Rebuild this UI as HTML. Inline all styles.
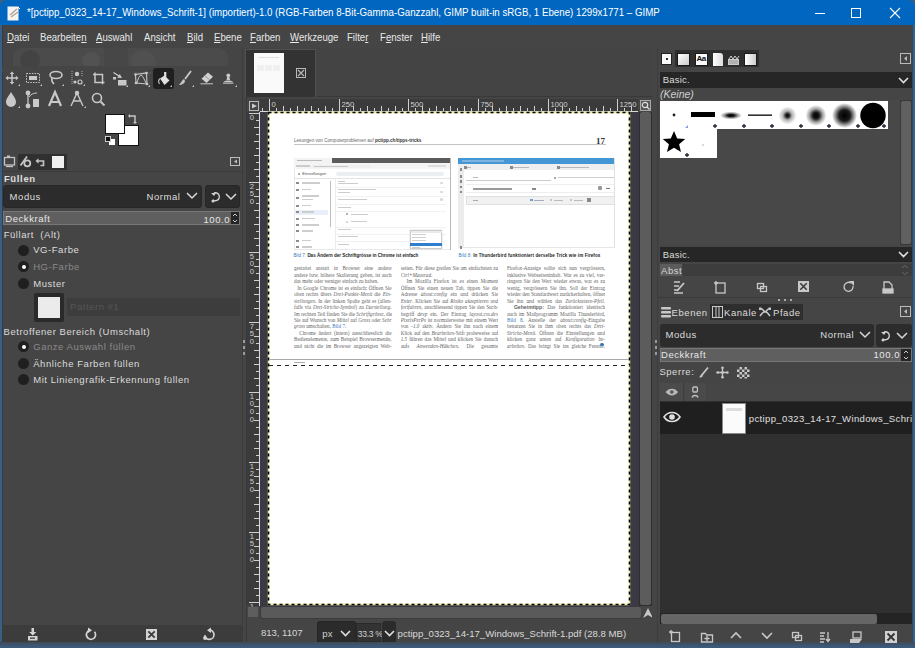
<!DOCTYPE html>
<html><head><meta charset="utf-8">
<style>
*{margin:0;padding:0;box-sizing:border-box}
html,body{width:915px;height:648px;overflow:hidden;background:linear-gradient(180deg,#3a5f84 0,#3a5f84 641px,#404a55 642px,#3c5877 646px,#3b5b7e 648px)}
body{position:relative;font-family:"Liberation Sans",sans-serif;color:#dadada;font-size:12px}
.a{position:absolute}
.t{position:absolute;white-space:nowrap;line-height:1}
svg{position:absolute;overflow:visible}
#title{left:0;top:0;width:915px;height:25px;background:#0066bf;color:#fff;border-radius:7px 7px 0 0}
#app{left:2px;top:25px;width:911px;height:617px;background:#454545}
.mn{font-size:10.8px;color:#e8e8e8;top:32.1px;transform:scaleX(0.89);transform-origin:0 0}
.ui{font-size:9.5px;letter-spacing:0.55px;color:#dcdcdc}
.dark{background:#2b2b2b}
.pl{font-family:"Liberation Serif",serif;font-size:5.15px;line-height:6px;height:6.2px;color:#646464;white-space:nowrap;overflow:hidden;text-align:justify}
</style></head><body>
<!-- title bar -->
<div id="title" class="a">
  <svg style="left:7px;top:6px" width="14" height="15" viewBox="0 0 14 15">
    <rect x="0.5" y="0.5" width="11" height="14" fill="#f4f4f4"/>
    <path d="M3 9 L10 3 M4 11 L11 6" stroke="#b0a090" stroke-width="1.3"/>
    <path d="M11 1 L13 3" stroke="#fff" stroke-width="1"/>
  </svg>
  <div class="t" style="left:26.5px;top:7.3px;font-size:10.9px;color:#fff;transform:scaleX(0.893);transform-origin:0 0">*[pctipp_0323_14-17_Windows_Schrift-1] (importiert)-1.0 (RGB-Farben 8-Bit-Gamma-Ganzzahl, GIMP built-in sRGB, 1 Ebene) 1299x1771 – GIMP</div>
  <div class="a" style="left:815px;top:13px;width:10px;height:1px;background:#fff"></div>
  <div class="a" style="left:851px;top:8px;width:10px;height:10px;border:1px solid #fff"></div>
  <svg style="left:890px;top:8px" width="10" height="10" viewBox="0 0 10 10"><path d="M0 0L10 10M10 0L0 10" stroke="#fff" stroke-width="1.1"/></svg>
</div>
<div id="app" class="a"></div>
<div class="a" style="left:913px;top:25px;width:2px;height:617px;background:#28639a"></div>
<div class="a" style="left:2px;top:25px;width:1px;height:617px;background:#333d48"></div>

<!-- menu -->
<div class="t mn" style="left:7px"><u>D</u>atei</div>
<div class="t mn" style="left:40px">Bearbeite<u>n</u></div>
<div class="t mn" style="left:96px"><u>A</u>uswahl</div>
<div class="t mn" style="left:144px">An<u>s</u>icht</div>
<div class="t mn" style="left:187px"><u>B</u>ild</div>
<div class="t mn" style="left:214px"><u>E</u>bene</div>
<div class="t mn" style="left:250px"><u>F</u>arben</div>
<div class="t mn" style="left:290px"><u>W</u>erkzeuge</div>
<div class="t mn" style="left:347px">Filte<u>r</u></div>
<div class="t mn" style="left:380px">F<u>e</u>nster</div>
<div class="t mn" style="left:421px"><u>H</u>ilfe</div>


<!-- LEFT PANEL -->
<!-- wilber silhouette -->
<div class="a" style="left:13px;top:48px;width:215px;height:18px;background:#4b4b4b;border-radius:9px 9px 0 0"></div>
<div class="a" style="left:20px;top:50px;width:20px;height:20px;border-radius:50%;background:#434343"></div>
<div class="a" style="left:82px;top:52px;width:18px;height:18px;border-radius:50%;background:#525252"></div>
<div class="a" style="left:104px;top:48px;width:24px;height:18px;background:#474747"></div>
<div class="a" style="left:130px;top:50px;width:26px;height:26px;border-radius:50%;background:#505050"></div>
<div class="a" style="left:2px;top:66px;width:242px;height:6px;background:#454545"></div>

<!-- active tool bg -->
<div class="a" style="left:153px;top:68px;width:21px;height:21px;background:#1f1f1f;border-radius:3px"></div>

<svg style="left:0;top:0" width="245" height="150">
 <g fill="none" stroke="#c8c8c8" stroke-width="1.6">
  <!-- move -->
  <path d="M12 73v10M7 78h10" stroke-width="1.5"/>
  <path d="M12 71.5l2.3 2.6h-4.6zM12 84.5l2.3-2.6h-4.6zM5.5 78l2.6-2.3v4.6zM18.5 78l-2.6-2.3v4.6z" fill="#c8c8c8" stroke="none"/>
  <!-- rect select -->
  <rect x="26.5" y="73.5" width="13" height="9" stroke-dasharray="1.5 1.2" stroke-width="1"/>
  <rect x="29" y="76" width="8" height="4" fill="#c8c8c8" stroke="none"/>
  <!-- lasso -->
  <ellipse cx="56" cy="75" rx="6" ry="3.5"/>
  <path d="M52 78c-1 3 1 5 2 6"/>
  <!-- fuzzy select -->
  <circle cx="77" cy="74" r="2.2" fill="#c8c8c8" stroke="none"/>
  <circle cx="75" cy="82" r="1.6" fill="#c8c8c8" stroke="none"/>
  <circle cx="80" cy="82" r="2" stroke-width="1.2"/>
  <path d="M72 71v14M82 71v6" stroke-width="0.8" stroke-dasharray="1 1"/>
  <!-- crop -->
  <path d="M95 72.5v10h9.5M93 74.5h9.5v9.8" stroke-width="1.5"/>
  <!-- scale / transform -->
  <path d="M113.5 72.5l5.5 3.5" stroke-width="1.4"/>
  <path d="M122 78l-4.8-0.2 2.6-3.8z" fill="#c8c8c8" stroke="none"/>
  <rect x="118" y="80" width="8.5" height="5.5" fill="#c8c8c8" stroke="none"/>
  <rect x="113" y="77" width="3" height="2.5" fill="#c8c8c8" stroke="none"/>
  <!-- perspective -->
  <path d="M135.5 74.5l11-1.5 0.5 11-11-1z" stroke-width="1.1"/>
  <path d="M137 83c1-4 2-7 4-8 2 1 3 4 5 8" stroke-width="1"/>
  <circle cx="135.5" cy="74.5" r="1.3" fill="#c8c8c8" stroke="none"/><circle cx="146.5" cy="73" r="1.3" fill="#c8c8c8" stroke="none"/>
  <circle cx="147" cy="84" r="1.3" fill="#c8c8c8" stroke="none"/><circle cx="136" cy="83" r="1.3" fill="#c8c8c8" stroke="none"/>
  <!-- bucket fill -->
  <path d="M165.2 72v6" stroke="#e0e0e0" stroke-width="2.2"/>
  <path d="M160 78.5l4.5-3 5 5-5 4.5z" fill="#e0e0e0" stroke="none"/>
  <path d="M160 78.5c-1.5 1.5-1.5 4-0.5 5.5" stroke="#bdbdbd" stroke-width="1.2"/>
  <!-- paintbrush -->
  <path d="M191 71l-6 8" stroke-width="1.8"/>
  <path d="M184 79c-2 1-3 4-5 6 3 0 6-2 6-4z" fill="#c8c8c8" stroke="none"/>
  <!-- eraser -->
  <path d="M208 72.5l5 4.2-6.5 6.3-5-4.2z" fill="#cfcfcf" stroke="none"/>
  <path d="M204.5 75.5l5 4.2" stroke="#8a8a8a" stroke-width="0.8"/>
  <path d="M200.5 83.8h12.5" stroke-width="1"/>
  <!-- clone stamp -->
  <circle cx="228.3" cy="75.3" r="1.9" fill="#c8c8c8" stroke="none"/>
  <path d="M227.3 76.5h2l0.8 3.5h-3.6z" fill="#c8c8c8" stroke="none"/>
  <path d="M223.5 82.3c0.5-2.5 9-2.5 9.5 0z" fill="#c8c8c8" stroke="none"/>
  <path d="M223 83.2h10.5" stroke-width="1"/>
  <!-- row 2: blur drop -->
  <path d="M11 92c-3 5-5 7-5 10a5 5 0 0 0 10 0c0-3-2-5-5-10z" fill="#c8c8c8" stroke="none"/>
  <!-- paths -->
  <path d="M28 93v14" stroke-width="1.3"/>
  <circle cx="28" cy="93" r="1.6" fill="#c8c8c8"/><circle cx="28" cy="106" r="1.6" fill="#c8c8c8"/>
  <path d="M29 97c2-3 5-4 8-4" stroke-width="1"/>
  <rect x="33" y="99" width="6" height="8" fill="#c8c8c8" stroke="none"/>
  <!-- text -->
  <path d="M49 106l6-14 6 14M51 102h8" stroke-width="2.2"/>
  <!-- measure-ish A -->
  <path d="M71 106l6-13 6 13M73 101h8" stroke-width="1.4"/>
  <circle cx="77" cy="93" r="1.4" fill="#c8c8c8"/>
  <!-- zoom -->
  <circle cx="97" cy="98" r="4.5" stroke-width="1.6"/>
  <path d="M100.5 101.5l4 4" stroke-width="2"/>
 </g>
 <g fill="#c8c8c8">
  <path d="M18 86l2-2v2z"/><path d="M40 86l2-2v2z"/><path d="M62 86l2-2v2z"/><path d="M83 86l2-2v2z"/>
  <path d="M126 87l2-2v2z"/><path d="M148 87l2-2v2z"/><path d="M170 87l2-2v2z"/><path d="M192 87l2-2v2z"/>
  <path d="M235 87l2-2v2z"/><path d="M18 108l2-2v2z"/><path d="M84 108l2-2v2z"/>
 </g>
</svg>

<!-- FG/BG -->
<div class="a" style="left:118px;top:125px;width:21px;height:21px;background:#fff;border:1px solid #111"></div>
<div class="a" style="left:105px;top:114px;width:20px;height:20px;background:#fff;border:1px solid #111"></div>
<div class="a" style="left:109px;top:139px;width:6px;height:6px;background:#fff"></div>
<div class="a" style="left:105px;top:136px;width:6px;height:6px;background:#111;border:1px solid #ccc"></div>
<svg style="left:128px;top:114px" width="11" height="10" viewBox="0 0 11 10"><path d="M1 2h6v6" fill="none" stroke="#c8c8c8" stroke-width="1.4"/><path d="M0 2l2-2v4z M5 8h4l-2 2z" fill="#c8c8c8"/></svg>

<!-- tool options tabs -->
<div class="a" style="left:18px;top:154px;width:49px;height:16px;background:#303030"></div>
<svg style="left:0;top:150px" width="245" height="25">
  <g fill="none" stroke="#c4c4c4" stroke-width="1.3">
   <rect x="4.5" y="7.5" width="10" height="7.5"/><path d="M6 16.5h7"/>
  </g>
  <rect x="7" y="5.5" width="3" height="1.5" fill="#c4c4c4"/>
  <path d="M20.5 15.5l6.5-9" stroke="#c4c4c4" stroke-width="1.8"/>
  <circle cx="27.3" cy="13.3" r="3" fill="none" stroke="#c4c4c4" stroke-width="1.8"/>
  <path d="M38 11h5.5v4.5h-3" fill="none" stroke="#c4c4c4" stroke-width="1.7"/>
  <path d="M35.5 11l3-2.8v5.6z" fill="#c4c4c4"/>
  <rect x="52" y="6" width="12" height="12" fill="#f0f0f0"/>
  <rect x="230.5" y="7.5" width="9" height="8" fill="none" stroke="#bdbdbd"/>
  <path d="M237 9.5l-3 2 3 2z" fill="#bdbdbd"/>
</svg>
<div class="a" style="left:2px;top:171px;width:243px;height:1px;background:#3a3a3a"></div>
<div class="t" style="left:3.9px;top:174.3px;font-size:9.5px;font-weight:bold;color:#e0e0e0;letter-spacing:0.65px">Füllen</div>

<!-- Modus combo -->
<div class="a dark" style="left:3px;top:185px;width:199px;height:23px;border-radius:3px;background:#2c2c2c;border:1px solid #262626"></div>
<div class="t ui" style="left:9.6px;top:192px">Modus</div>
<div class="t ui" style="left:146.5px;top:191.7px">Normal</div>
<svg style="left:186px;top:192px" width="12" height="8"><path d="M1 1l5 5 5-5" fill="none" stroke="#d8d8d8" stroke-width="1.5"/></svg>
<div class="a dark" style="left:205px;top:185px;width:35px;height:23px;border-radius:3px;background:#2c2c2c;border:1px solid #262626"></div>
<svg style="left:209px;top:190px" width="30" height="14">
  <path d="M5 3a4 4 0 1 1-1 7" fill="none" stroke="#d0d0d0" stroke-width="1.4"/><path d="M2 3h5l-2 3z" fill="#d0d0d0"/><circle cx="4" cy="11" r="1.5" fill="#d0d0d0"/>
  <path d="M17 4l5 5 5-5" fill="none" stroke="#d8d8d8" stroke-width="1.5"/>
</svg>

<!-- Deckkraft -->
<div class="a" style="left:3px;top:211px;width:237px;height:14px;background:#5f5f5f;border:1px solid #777"></div>
<div class="a" style="left:231px;top:212px;width:8px;height:12px;background:#252525"></div>
<svg style="left:231px;top:212px" width="8" height="12"><path d="M2 4l2-2 2 2M2 8l2 2 2-2" fill="none" stroke="#ccc" stroke-width="1"/></svg>
<div class="t ui" style="left:5.3px;top:214.4px;color:#e6e6e6">Deckkraft</div>
<div class="t ui" style="left:203.5px;top:214.5px;color:#e6e6e6">100.0</div>

<div class="t ui" style="left:3.7px;top:229.9px;white-space:pre">Füllart  (Alt)</div>
<div class="a" style="left:18px;top:245px;width:11px;height:11px;border-radius:50%;background:#1f1f1f"></div>
<div class="t ui" style="left:33.2px;top:245.3px">VG-Farbe</div>
<div class="a" style="left:18px;top:261px;width:11px;height:11px;border-radius:50%;background:#1f1f1f"></div>
<div class="a" style="left:21.5px;top:264.5px;width:4px;height:4px;border-radius:50%;background:#fff"></div>
<div class="t ui" style="left:33.2px;top:262px;color:#8a8a8a">HG-Farbe</div>
<div class="a" style="left:18px;top:278px;width:11px;height:11px;border-radius:50%;background:#1f1f1f"></div>
<div class="t ui" style="left:33.2px;top:278.8px">Muster</div>

<div class="a" style="left:34px;top:293px;width:30px;height:29px;background:#2a2a2a;border-radius:2px"></div>
<div class="a" style="left:38px;top:297px;width:22px;height:21px;background:#ebebeb"></div>
<div class="a" style="left:67px;top:298px;width:173px;height:18px;background:#3d3d3d"></div>
<div class="t ui" style="left:70px;top:302px;color:#555">Pattern #1</div>

<div class="t ui" style="left:3.5px;top:326.8px">Betroffener Bereich (Umschalt)</div>
<div class="a" style="left:18px;top:341px;width:11px;height:11px;border-radius:50%;background:#1f1f1f"></div>
<div class="a" style="left:21.5px;top:344.5px;width:4px;height:4px;border-radius:50%;background:#fff"></div>
<div class="t ui" style="left:33.2px;top:341.7px;color:#8a8a8a">Ganze Auswahl füllen</div>
<div class="a" style="left:18px;top:358px;width:11px;height:11px;border-radius:50%;background:#1f1f1f"></div>
<div class="t ui" style="left:33.2px;top:358.8px">Ähnliche Farben füllen</div>
<div class="a" style="left:18px;top:374px;width:11px;height:11px;border-radius:50%;background:#1f1f1f"></div>
<div class="t ui" style="left:33.2px;top:375.2px">Mit Liniengrafik-Erkennung füllen</div>

<!-- left bottom buttons -->
<div class="a" style="left:2px;top:625px;width:240px;height:17px;background:#3c3c3c"></div>
<svg style="left:0;top:625px" width="245" height="17">
 <g fill="#d4d4d4">
  <path d="M31.5 3h2.5v4h2.3l-3.55 3.5-3.55-3.5h2.3z"/><rect x="28" y="11" width="9.5" height="4.5"/>
 </g>
 <rect x="30" y="12.5" width="5" height="1.3" fill="#3c3c3c"/>
 <g fill="none" stroke="#d4d4d4" stroke-width="1.7">
  <path d="M90 5.2a4.6 4.6 0 1 0 4.5 1.5"/>
  <rect x="146" y="4" width="11" height="11" fill="#d4d4d4" stroke="none"/><path d="M148.3 6.3l6.4 6.4M154.7 6.3l-6.4 6.4" stroke="#3c3c3c" stroke-width="1.8"/>
  <path d="M209 5.2a4.6 4.6 0 1 1 -4.2 5"/>
 </g>
 <path d="M88 2.5v5.5l4-2.7z" fill="#d4d4d4"/>
 <path d="M211 2.5v5.5l-4-2.7z" fill="#d4d4d4"/>
 <circle cx="205" cy="13" r="1.9" fill="#d4d4d4"/>
</svg>

<!-- left pane separator -->
<div class="a" style="left:242px;top:48px;width:1px;height:594px;background:#3c3c3c"></div>
<div class="a" style="left:243px;top:48px;width:3px;height:594px;background:#454545"></div>
<div class="a" style="left:246px;top:48px;width:1px;height:594px;background:#3a3a3a"></div>
<div class="a" style="left:243px;top:340px;width:2px;height:2.5px;background:#9a9a9a"></div>
<div class="a" style="left:243px;top:346px;width:2px;height:2.5px;background:#9a9a9a"></div>
<div class="a" style="left:243px;top:352px;width:2px;height:2.5px;background:#9a9a9a"></div>


<!-- CENTER -->
<!-- image tab bar -->
<div class="a" style="left:247px;top:48px;width:405px;height:50px;background:#444"></div>
<div class="a" style="left:245px;top:49px;width:71px;height:48px;background:#333;border:1px solid #505050;border-bottom:none"></div>
<div class="a" style="left:316px;top:96px;width:336px;height:1px;background:#393939"></div>
<div class="a" style="left:254px;top:53px;width:30px;height:40px;background:#fafafa"></div>
<div class="a" style="left:258px;top:57px;width:21px;height:1px;background:#e0e0e0"></div>
<div class="a" style="left:257px;top:65px;width:7px;height:6px;background:#f0f0f0"></div>
<div class="a" style="left:265px;top:65px;width:7px;height:6px;background:#f0f0f0"></div>
<div class="a" style="left:273px;top:65px;width:7px;height:6px;background:#f0f0f0"></div>
<svg style="left:296px;top:68px" width="10" height="10"><rect x="0.5" y="0.5" width="9" height="9" fill="none" stroke="#b8b8b8"/><path d="M2 2l6 6M8 2l-6 6" stroke="#b8b8b8" stroke-width="1.2"/></svg>

<!-- rulers -->
<div class="a" style="left:247px;top:98px;width:408px;height:522px;background:#454545"></div>
<div class="a" style="left:260px;top:99px;width:378px;height:13px;background:#3b3b3b"></div>
<div class="a" style="left:247px;top:112px;width:13px;height:494px;background:#3b3b3b"></div>
<svg style="left:249px;top:101px" width="10" height="10"><rect x="0.5" y="0.5" width="9" height="9" fill="none" stroke="#bbb"/><path d="M3 2.5l5 2.5-5 2.5z" fill="#ccc"/></svg>
<svg id="hruler" style="left:260px;top:99px" width="378" height="13"><rect x="0" y="12" width="378" height="1" fill="#d8d8d8"/><path d="M2.5 9V12" stroke="#d0d0d0" stroke-width="1"/><path d="M9.5 0V12" stroke="#d0d0d0" stroke-width="1"/><text x="11.5" y="7.8" font-size="7.7" fill="#d0d0d0" font-family="Liberation Sans">0</text><path d="M16.5 9V12" stroke="#d0d0d0" stroke-width="1"/><path d="M23.5 7V12" stroke="#d0d0d0" stroke-width="1"/><path d="M30.5 9V12" stroke="#d0d0d0" stroke-width="1"/><path d="M37.5 7V12" stroke="#d0d0d0" stroke-width="1"/><path d="M44.5 9V12" stroke="#d0d0d0" stroke-width="1"/><path d="M51.5 7V12" stroke="#d0d0d0" stroke-width="1"/><path d="M58.5 9V12" stroke="#d0d0d0" stroke-width="1"/><path d="M65.5 7V12" stroke="#d0d0d0" stroke-width="1"/><path d="M72.5 9V12" stroke="#d0d0d0" stroke-width="1"/><path d="M79.5 0V12" stroke="#d0d0d0" stroke-width="1"/><text x="81.5" y="7.8" font-size="7.7" fill="#d0d0d0" font-family="Liberation Sans">250</text><path d="M86.5 9V12" stroke="#d0d0d0" stroke-width="1"/><path d="M93.5 7V12" stroke="#d0d0d0" stroke-width="1"/><path d="M100.5 9V12" stroke="#d0d0d0" stroke-width="1"/><path d="M107.5 7V12" stroke="#d0d0d0" stroke-width="1"/><path d="M114.5 9V12" stroke="#d0d0d0" stroke-width="1"/><path d="M121.5 7V12" stroke="#d0d0d0" stroke-width="1"/><path d="M128.5 9V12" stroke="#d0d0d0" stroke-width="1"/><path d="M135.5 7V12" stroke="#d0d0d0" stroke-width="1"/><path d="M142.5 9V12" stroke="#d0d0d0" stroke-width="1"/><path d="M148.5 0V12" stroke="#d0d0d0" stroke-width="1"/><text x="150.5" y="7.8" font-size="7.7" fill="#d0d0d0" font-family="Liberation Sans">500</text><path d="M155.5 9V12" stroke="#d0d0d0" stroke-width="1"/><path d="M162.5 7V12" stroke="#d0d0d0" stroke-width="1"/><path d="M169.5 9V12" stroke="#d0d0d0" stroke-width="1"/><path d="M176.5 7V12" stroke="#d0d0d0" stroke-width="1"/><path d="M183.5 9V12" stroke="#d0d0d0" stroke-width="1"/><path d="M190.5 7V12" stroke="#d0d0d0" stroke-width="1"/><path d="M197.5 9V12" stroke="#d0d0d0" stroke-width="1"/><path d="M204.5 7V12" stroke="#d0d0d0" stroke-width="1"/><path d="M211.5 9V12" stroke="#d0d0d0" stroke-width="1"/><path d="M218.5 0V12" stroke="#d0d0d0" stroke-width="1"/><text x="220.5" y="7.8" font-size="7.7" fill="#d0d0d0" font-family="Liberation Sans">750</text><path d="M225.5 9V12" stroke="#d0d0d0" stroke-width="1"/><path d="M232.5 7V12" stroke="#d0d0d0" stroke-width="1"/><path d="M239.5 9V12" stroke="#d0d0d0" stroke-width="1"/><path d="M246.5 7V12" stroke="#d0d0d0" stroke-width="1"/><path d="M253.5 9V12" stroke="#d0d0d0" stroke-width="1"/><path d="M260.5 7V12" stroke="#d0d0d0" stroke-width="1"/><path d="M267.5 9V12" stroke="#d0d0d0" stroke-width="1"/><path d="M274.5 7V12" stroke="#d0d0d0" stroke-width="1"/><path d="M281.5 9V12" stroke="#d0d0d0" stroke-width="1"/><path d="M288.5 0V12" stroke="#d0d0d0" stroke-width="1"/><text x="290.5" y="7.8" font-size="7.7" fill="#d0d0d0" font-family="Liberation Sans">1000</text><path d="M295.5 9V12" stroke="#d0d0d0" stroke-width="1"/><path d="M302.5 7V12" stroke="#d0d0d0" stroke-width="1"/><path d="M309.5 9V12" stroke="#d0d0d0" stroke-width="1"/><path d="M316.5 7V12" stroke="#d0d0d0" stroke-width="1"/><path d="M322.5 9V12" stroke="#d0d0d0" stroke-width="1"/><path d="M329.5 7V12" stroke="#d0d0d0" stroke-width="1"/><path d="M336.5 9V12" stroke="#d0d0d0" stroke-width="1"/><path d="M343.5 7V12" stroke="#d0d0d0" stroke-width="1"/><path d="M350.5 9V12" stroke="#d0d0d0" stroke-width="1"/><path d="M357.5 0V12" stroke="#d0d0d0" stroke-width="1"/><text x="359.5" y="7.8" font-size="7.7" fill="#d0d0d0" font-family="Liberation Sans">1250</text><path d="M364.5 9V12" stroke="#d0d0d0" stroke-width="1"/><path d="M371.5 7V12" stroke="#d0d0d0" stroke-width="1"/></svg>
<svg id="vruler" style="left:247px;top:112px" width="13" height="494"><rect x="12" y="0" width="1" height="494" fill="#d8d8d8"/><path d="M2 1.5H12" stroke="#d0d0d0" stroke-width="1"/><text x="5" y="7.8" text-anchor="middle" font-size="7.7" fill="#cfcfcf" font-family="Liberation Sans">0</text><path d="M9 8.5H12" stroke="#d0d0d0" stroke-width="1"/><path d="M7 15.5H12" stroke="#d0d0d0" stroke-width="1"/><path d="M9 22.5H12" stroke="#d0d0d0" stroke-width="1"/><path d="M7 29.5H12" stroke="#d0d0d0" stroke-width="1"/><path d="M9 36.5H12" stroke="#d0d0d0" stroke-width="1"/><path d="M7 43.5H12" stroke="#d0d0d0" stroke-width="1"/><path d="M9 50.5H12" stroke="#d0d0d0" stroke-width="1"/><path d="M7 57.5H12" stroke="#d0d0d0" stroke-width="1"/><path d="M9 64.5H12" stroke="#d0d0d0" stroke-width="1"/><path d="M2 70.5H12" stroke="#d0d0d0" stroke-width="1"/><text x="5" y="76.8" text-anchor="middle" font-size="7.7" fill="#cfcfcf" font-family="Liberation Sans">2</text><text x="5" y="84.39999999999999" text-anchor="middle" font-size="7.7" fill="#cfcfcf" font-family="Liberation Sans">5</text><text x="5" y="92.0" text-anchor="middle" font-size="7.7" fill="#cfcfcf" font-family="Liberation Sans">0</text><path d="M9 77.5H12" stroke="#d0d0d0" stroke-width="1"/><path d="M7 84.5H12" stroke="#d0d0d0" stroke-width="1"/><path d="M9 91.5H12" stroke="#d0d0d0" stroke-width="1"/><path d="M7 98.5H12" stroke="#d0d0d0" stroke-width="1"/><path d="M9 105.5H12" stroke="#d0d0d0" stroke-width="1"/><path d="M7 112.5H12" stroke="#d0d0d0" stroke-width="1"/><path d="M9 119.5H12" stroke="#d0d0d0" stroke-width="1"/><path d="M7 126.5H12" stroke="#d0d0d0" stroke-width="1"/><path d="M9 133.5H12" stroke="#d0d0d0" stroke-width="1"/><path d="M2 140.5H12" stroke="#d0d0d0" stroke-width="1"/><text x="5" y="146.8" text-anchor="middle" font-size="7.7" fill="#cfcfcf" font-family="Liberation Sans">5</text><text x="5" y="154.4" text-anchor="middle" font-size="7.7" fill="#cfcfcf" font-family="Liberation Sans">0</text><text x="5" y="162.0" text-anchor="middle" font-size="7.7" fill="#cfcfcf" font-family="Liberation Sans">0</text><path d="M9 147.5H12" stroke="#d0d0d0" stroke-width="1"/><path d="M7 154.5H12" stroke="#d0d0d0" stroke-width="1"/><path d="M9 161.5H12" stroke="#d0d0d0" stroke-width="1"/><path d="M7 168.5H12" stroke="#d0d0d0" stroke-width="1"/><path d="M9 175.5H12" stroke="#d0d0d0" stroke-width="1"/><path d="M7 182.5H12" stroke="#d0d0d0" stroke-width="1"/><path d="M9 189.5H12" stroke="#d0d0d0" stroke-width="1"/><path d="M7 196.5H12" stroke="#d0d0d0" stroke-width="1"/><path d="M9 203.5H12" stroke="#d0d0d0" stroke-width="1"/><path d="M2 210.5H12" stroke="#d0d0d0" stroke-width="1"/><text x="5" y="216.8" text-anchor="middle" font-size="7.7" fill="#cfcfcf" font-family="Liberation Sans">7</text><text x="5" y="224.4" text-anchor="middle" font-size="7.7" fill="#cfcfcf" font-family="Liberation Sans">5</text><text x="5" y="232.0" text-anchor="middle" font-size="7.7" fill="#cfcfcf" font-family="Liberation Sans">0</text><path d="M9 217.5H12" stroke="#d0d0d0" stroke-width="1"/><path d="M7 224.5H12" stroke="#d0d0d0" stroke-width="1"/><path d="M9 231.5H12" stroke="#d0d0d0" stroke-width="1"/><path d="M7 238.5H12" stroke="#d0d0d0" stroke-width="1"/><path d="M9 245.5H12" stroke="#d0d0d0" stroke-width="1"/><path d="M7 252.5H12" stroke="#d0d0d0" stroke-width="1"/><path d="M9 259.5H12" stroke="#d0d0d0" stroke-width="1"/><path d="M7 266.5H12" stroke="#d0d0d0" stroke-width="1"/><path d="M9 273.5H12" stroke="#d0d0d0" stroke-width="1"/><path d="M2 280.5H12" stroke="#d0d0d0" stroke-width="1"/><text x="5" y="286.8" text-anchor="middle" font-size="7.7" fill="#cfcfcf" font-family="Liberation Sans">1</text><text x="5" y="294.40000000000003" text-anchor="middle" font-size="7.7" fill="#cfcfcf" font-family="Liberation Sans">0</text><text x="5" y="302.0" text-anchor="middle" font-size="7.7" fill="#cfcfcf" font-family="Liberation Sans">0</text><text x="5" y="309.6" text-anchor="middle" font-size="7.7" fill="#cfcfcf" font-family="Liberation Sans">0</text><path d="M9 287.5H12" stroke="#d0d0d0" stroke-width="1"/><path d="M7 294.5H12" stroke="#d0d0d0" stroke-width="1"/><path d="M9 301.5H12" stroke="#d0d0d0" stroke-width="1"/><path d="M7 308.5H12" stroke="#d0d0d0" stroke-width="1"/><path d="M9 315.5H12" stroke="#d0d0d0" stroke-width="1"/><path d="M7 322.5H12" stroke="#d0d0d0" stroke-width="1"/><path d="M9 329.5H12" stroke="#d0d0d0" stroke-width="1"/><path d="M7 336.5H12" stroke="#d0d0d0" stroke-width="1"/><path d="M9 343.5H12" stroke="#d0d0d0" stroke-width="1"/><path d="M2 350.5H12" stroke="#d0d0d0" stroke-width="1"/><text x="5" y="356.8" text-anchor="middle" font-size="7.7" fill="#cfcfcf" font-family="Liberation Sans">1</text><text x="5" y="364.40000000000003" text-anchor="middle" font-size="7.7" fill="#cfcfcf" font-family="Liberation Sans">2</text><text x="5" y="372.0" text-anchor="middle" font-size="7.7" fill="#cfcfcf" font-family="Liberation Sans">5</text><text x="5" y="379.6" text-anchor="middle" font-size="7.7" fill="#cfcfcf" font-family="Liberation Sans">0</text><path d="M9 357.5H12" stroke="#d0d0d0" stroke-width="1"/><path d="M7 364.5H12" stroke="#d0d0d0" stroke-width="1"/><path d="M9 371.5H12" stroke="#d0d0d0" stroke-width="1"/><path d="M7 378.5H12" stroke="#d0d0d0" stroke-width="1"/><path d="M9 385.5H12" stroke="#d0d0d0" stroke-width="1"/><path d="M7 392.5H12" stroke="#d0d0d0" stroke-width="1"/><path d="M9 399.5H12" stroke="#d0d0d0" stroke-width="1"/><path d="M7 406.5H12" stroke="#d0d0d0" stroke-width="1"/><path d="M9 413.5H12" stroke="#d0d0d0" stroke-width="1"/><path d="M2 420.5H12" stroke="#d0d0d0" stroke-width="1"/><text x="5" y="426.8" text-anchor="middle" font-size="7.7" fill="#cfcfcf" font-family="Liberation Sans">1</text><text x="5" y="434.40000000000003" text-anchor="middle" font-size="7.7" fill="#cfcfcf" font-family="Liberation Sans">5</text><text x="5" y="442.0" text-anchor="middle" font-size="7.7" fill="#cfcfcf" font-family="Liberation Sans">0</text><text x="5" y="449.6" text-anchor="middle" font-size="7.7" fill="#cfcfcf" font-family="Liberation Sans">0</text><path d="M9 427.5H12" stroke="#d0d0d0" stroke-width="1"/><path d="M7 434.5H12" stroke="#d0d0d0" stroke-width="1"/><path d="M9 441.5H12" stroke="#d0d0d0" stroke-width="1"/><path d="M7 448.5H12" stroke="#d0d0d0" stroke-width="1"/><path d="M9 455.5H12" stroke="#d0d0d0" stroke-width="1"/><path d="M7 462.5H12" stroke="#d0d0d0" stroke-width="1"/><path d="M9 469.5H12" stroke="#d0d0d0" stroke-width="1"/><path d="M7 476.5H12" stroke="#d0d0d0" stroke-width="1"/><path d="M9 483.5H12" stroke="#d0d0d0" stroke-width="1"/><path d="M2 490.5H12" stroke="#d0d0d0" stroke-width="1"/><text x="5" y="496.8" text-anchor="middle" font-size="7.7" fill="#cfcfcf" font-family="Liberation Sans">1</text><text x="5" y="504.40000000000003" text-anchor="middle" font-size="7.7" fill="#cfcfcf" font-family="Liberation Sans">7</text><text x="5" y="512.0" text-anchor="middle" font-size="7.7" fill="#cfcfcf" font-family="Liberation Sans">5</text><text x="5" y="519.6" text-anchor="middle" font-size="7.7" fill="#cfcfcf" font-family="Liberation Sans">0</text></svg>
<svg style="left:640px;top:100px" width="11" height="11"><rect x="0.5" y="0.5" width="10" height="10" fill="#555" stroke="#aaa"/><circle cx="5" cy="5" r="2.7" fill="none" stroke="#ddd" stroke-width="1.2"/><path d="M7 7l2.5 2.5" stroke="#ddd" stroke-width="1.3"/></svg>

<!-- canvas -->
<div class="a" style="left:260px;top:112px;width:380px;height:495px;background:#3a3944"></div>
<div class="a" style="left:268px;top:112px;width:362px;height:493px;background:#fff;border:1px dashed #000"></div>
<svg style="left:268px;top:112px" width="363" height="494">
 <rect x="0.5" y="0.5" width="361" height="492" fill="none" stroke="#e8e89a" stroke-width="1.6"/>
 <rect x="0.5" y="0.5" width="361" height="492" fill="none" stroke="#000" stroke-width="1.6" stroke-dasharray="3 3"/>
 <path d="M1 253.5h361" stroke="#fff" stroke-width="1.2"/>
 <path d="M1 253.5h361" stroke="#222" stroke-width="1.2" stroke-dasharray="4 4"/>
</svg>
<div id="page" class="a" style="left:269px;top:113px;width:360px;height:252px;overflow:hidden">
<div class="t" style="left:25.0px;top:25.5px;font-size:4.6px;color:#666">Lesungen von Computerproblemen auf <b style="color:#333">pctipp.ch/tipps-tricks</b></div>
<div class="a" style="left:25.0px;top:30.8px;width:312.0px;height:0.6px;background:#c4c4c4"></div>
<div class="t" style="left:327.0px;top:23.8px;font-family:'Liberation Serif';font-weight:bold;font-size:9px;color:#333">17</div>
<div class="a" style="left:24.5px;top:45.4px;width:157.1px;height:91.6px;background:#fff;border:0.5px solid #e8e8e8"></div>
<div class="a" style="left:24.5px;top:45.4px;width:38.0px;height:5.0px;background:#f1f3f4"></div>
<div class="a" style="left:28.0px;top:46.9px;width:25.2px;height:1.6px;background:#bbb"></div>
<div class="a" style="left:62.7px;top:45.4px;width:118.9px;height:5.0px;background:#5b5b5b"></div>
<div class="a" style="left:24.5px;top:50.4px;width:157.1px;height:6.0px;background:#f4f4f4"></div>
<div class="a" style="left:27.0px;top:52.2px;width:14.0px;height:1.6px;background:#ccc"></div>
<div class="a" style="left:42.0px;top:51.8px;width:60.0px;height:3.2px;background:#efefef;border-radius:2px"></div>
<div class="a" style="left:45.0px;top:52.8px;width:33.6px;height:1.5px;background:#c8c8c8"></div>
<div class="a" style="left:159.0px;top:52.0px;width:18.0px;height:2.2px;background:#ddd"></div>
<div class="t" style="left:33.3px;top:58.6px;font-size:4.1px;color:#555;letter-spacing:-0.05px">Einstellungen</div>
<div class="a" style="left:28.5px;top:59.5px;width:2.8px;height:2.8px;background:#999;border-radius:1px"></div>
<div class="a" style="left:67.0px;top:59.0px;width:108.0px;height:4.4px;background:#eceff1;border-radius:2px"></div>
<div class="a" style="left:24.5px;top:65.3px;width:157.1px;height:0.5px;background:#e4e4e4"></div>
<div class="a" style="left:25.0px;top:96.5px;width:34.0px;height:5.0px;background:#e8effa"></div>
<div class="a" style="left:32.8px;top:69.2px;width:17.9px;height:1.4px;background:#cdcdcd"></div>
<div class="a" style="left:32.8px;top:75.7px;width:9.0px;height:1.4px;background:#cdcdcd"></div>
<div class="a" style="left:32.8px;top:82.2px;width:16.8px;height:1.4px;background:#cdcdcd"></div>
<div class="a" style="left:32.8px;top:85.7px;width:11.2px;height:1.4px;background:#cdcdcd"></div>
<div class="a" style="left:32.8px;top:91.7px;width:9.0px;height:1.4px;background:#cdcdcd"></div>
<div class="a" style="left:32.8px;top:98.2px;width:12.3px;height:1.4px;background:#cdcdcd"></div>
<div class="a" style="left:32.8px;top:104.7px;width:13.4px;height:1.4px;background:#cdcdcd"></div>
<div class="a" style="left:32.8px;top:111.2px;width:16.8px;height:1.4px;background:#cdcdcd"></div>
<div class="a" style="left:32.8px;top:117.2px;width:11.2px;height:1.4px;background:#cdcdcd"></div>
<div class="a" style="left:32.8px;top:126.8px;width:9.0px;height:1.4px;background:#cdcdcd"></div>
<div class="a" style="left:32.8px;top:133.2px;width:10.1px;height:1.4px;background:#cdcdcd"></div>
<div class="a" style="left:27.2px;top:69.0px;width:2.4px;height:2.4px;background:#8c8c8c"></div>
<div class="a" style="left:27.2px;top:75.5px;width:2.4px;height:2.4px;background:#8c8c8c"></div>
<div class="a" style="left:27.2px;top:83.5px;width:2.4px;height:2.4px;background:#8c8c8c"></div>
<div class="a" style="left:27.2px;top:91.5px;width:2.4px;height:2.4px;background:#8c8c8c"></div>
<div class="a" style="left:27.2px;top:98.0px;width:2.4px;height:2.4px;background:#8c8c8c"></div>
<div class="a" style="left:27.2px;top:104.5px;width:2.4px;height:2.4px;background:#8c8c8c"></div>
<div class="a" style="left:27.2px;top:111.0px;width:2.4px;height:2.4px;background:#8c8c8c"></div>
<div class="a" style="left:27.2px;top:117.0px;width:2.4px;height:2.4px;background:#8c8c8c"></div>
<div class="a" style="left:27.2px;top:126.6px;width:2.4px;height:2.4px;background:#8c8c8c"></div>
<div class="a" style="left:27.2px;top:133.0px;width:2.4px;height:2.4px;background:#8c8c8c"></div>
<div class="a" style="left:61.3px;top:68.0px;width:1.2px;height:46.0px;background:#bdbdbd"></div>
<div class="a" style="left:66.0px;top:66.0px;width:0.5px;height:71.0px;background:#ececec"></div>
<div class="a" style="left:82.0px;top:100.5px;width:16.8px;height:1.4px;background:#cdcdcd"></div>
<div class="a" style="left:82.0px;top:108.0px;width:15.7px;height:1.4px;background:#cdcdcd"></div>
<div class="a" style="left:69.0px;top:67.5px;width:6.7px;height:1.4px;background:#cdcdcd"></div>
<div class="a" style="left:69.0px;top:70.0px;width:20.2px;height:1.4px;background:#cdcdcd"></div>
<div class="a" style="left:69.0px;top:76.0px;width:38.1px;height:1.4px;background:#cdcdcd"></div>
<div class="a" style="left:69.0px;top:78.5px;width:12.3px;height:1.4px;background:#cdcdcd"></div>
<div class="a" style="left:69.0px;top:86.0px;width:29.1px;height:1.4px;background:#cdcdcd"></div>
<div class="a" style="left:69.0px;top:94.0px;width:13.4px;height:1.4px;background:#cdcdcd"></div>
<div class="a" style="left:69.0px;top:116.0px;width:13.4px;height:1.4px;background:#cdcdcd"></div>
<div class="a" style="left:69.0px;top:123.0px;width:20.2px;height:1.4px;background:#cdcdcd"></div>
<div class="a" style="left:69.0px;top:131.0px;width:11.2px;height:1.4px;background:#cdcdcd"></div>
<div class="a" style="left:67.0px;top:74.0px;width:110.0px;height:0.5px;background:#f2f2f2"></div>
<div class="a" style="left:67.0px;top:83.0px;width:110.0px;height:0.5px;background:#f2f2f2"></div>
<div class="a" style="left:67.0px;top:91.0px;width:110.0px;height:0.5px;background:#f2f2f2"></div>
<div class="a" style="left:67.0px;top:98.0px;width:110.0px;height:0.5px;background:#f2f2f2"></div>
<div class="a" style="left:67.0px;top:114.0px;width:110.0px;height:0.5px;background:#f2f2f2"></div>
<div class="a" style="left:67.0px;top:121.0px;width:110.0px;height:0.5px;background:#f2f2f2"></div>
<div class="a" style="left:67.0px;top:128.0px;width:110.0px;height:0.5px;background:#f2f2f2"></div>
<div class="a" style="left:171.0px;top:68.5px;width:2.5px;height:2.5px;background:#d8d8d8;border-radius:50%"></div>
<div class="a" style="left:171.0px;top:77.5px;width:2.5px;height:2.5px;background:#d8d8d8;border-radius:50%"></div>
<div class="a" style="left:171.0px;top:85.0px;width:2.5px;height:2.5px;background:#d8d8d8;border-radius:50%"></div>
<div class="a" style="left:77.0px;top:100.0px;width:2.2px;height:2.2px;background:#999;border-radius:50%"></div>
<div class="a" style="left:77.0px;top:107.5px;width:2.2px;height:2.2px;border:0.5px solid #bbb;border-radius:50%"></div>
<div class="a" style="left:140.7px;top:117.0px;width:32.6px;height:18.5px;background:#fff;border:0.5px solid #ccc;box-shadow:0 0 1.5px #ccc"></div>
<div class="a" style="left:141.5px;top:117.6px;width:31.0px;height:2.6px;background:#eaeaea"></div>
<div class="a" style="left:143.0px;top:121.2px;width:14.0px;height:0.8px;background:#d0d0d0"></div>
<div class="a" style="left:143.0px;top:124.0px;width:14.0px;height:0.8px;background:#d0d0d0"></div>
<div class="a" style="left:143.0px;top:126.8px;width:14.0px;height:0.8px;background:#d0d0d0"></div>
<div class="a" style="left:141.3px;top:130.0px;width:31.5px;height:2.7px;background:#2f7fd0"></div>
<div class="a" style="left:143.0px;top:133.5px;width:8.0px;height:1.0px;background:#ccc"></div>
<div class="a" style="left:181.0px;top:45.4px;width:0.6px;height:91.6px;background:#b8b8b8"></div>
<div class="t" style="left:24.6px;top:140.6px;font-size:4.5px;color:#222"><span style="color:#3b78c0">Bild 7:</span> <b>Das Ändern der Schriftgrösse in Chrome ist einfach</b></div>
<div class="a" style="left:189.4px;top:45.4px;width:156.6px;height:90.1px;background:#fff;border:0.5px solid #e6e6e6"></div>
<div class="a" style="left:189.4px;top:45.4px;width:156.6px;height:5.6px;background:#4596d4"></div>
<div class="a" style="left:193.0px;top:47.3px;width:41.6px;height:1.4px;background:#7fb3e0"></div>
<div class="a" style="left:189.4px;top:51.0px;width:156.6px;height:6.4px;background:#efefef"></div>
<div class="a" style="left:195.0px;top:53.0px;width:2.5px;height:2.5px;background:#888"></div>
<div class="a" style="left:198.0px;top:53.5px;width:3.6px;height:1.6px;background:#b8b8b8"></div>
<div class="a" style="left:241.0px;top:53.0px;width:2.5px;height:2.5px;background:#888"></div>
<div class="a" style="left:244.0px;top:53.5px;width:15.6px;height:1.6px;background:#b8b8b8"></div>
<div class="a" style="left:288.0px;top:53.0px;width:2.5px;height:2.5px;background:#888"></div>
<div class="a" style="left:291.0px;top:53.5px;width:28.8px;height:1.6px;background:#b8b8b8"></div>
<div class="a" style="left:189.4px;top:57.4px;width:5.6px;height:78.1px;background:#ececec"></div>
<div class="a" style="left:190.9px;top:55.0px;width:2.5px;height:2.5px;background:#8a8a8a"></div>
<div class="a" style="left:190.9px;top:62.0px;width:2.5px;height:2.5px;background:#8a8a8a"></div>
<div class="a" style="left:190.9px;top:67.0px;width:2.5px;height:2.5px;background:#8a8a8a"></div>
<div class="a" style="left:190.9px;top:72.5px;width:2.5px;height:2.5px;background:#8a8a8a"></div>
<div class="a" style="left:190.9px;top:77.5px;width:2.5px;height:2.5px;background:#8a8a8a"></div>
<div class="a" style="left:190.9px;top:133.0px;width:2.5px;height:2.5px;background:#8a8a8a"></div>
<div class="a" style="left:197.0px;top:61.0px;width:85.0px;height:6.7px;background:#fff;border-bottom:0.6px solid #ccc"></div>
<div class="a" style="left:204.0px;top:63.9px;width:4.8px;height:1.6px;background:#bbb"></div>
<div class="a" style="left:285.0px;top:63.5px;width:2.2px;height:2.2px;border:0.5px solid #aaa"></div>
<div class="a" style="left:289.0px;top:63.9px;width:55.5px;height:1.4px;background:#cfcfcf"></div>
<div class="a" style="left:197.0px;top:71.4px;width:149.0px;height:8.3px;background:#fff;border-top:0.5px solid #eee;border-bottom:0.5px solid #eee"></div>
<div class="a" style="left:204.0px;top:75.1px;width:38.8px;height:1.6px;background:#9a9a9a"></div>
<div class="a" style="left:263.0px;top:75.1px;width:4.2px;height:1.8px;background:#888"></div>
<div class="a" style="left:329.0px;top:73.3px;width:4.0px;height:4.0px;background:#999;border-radius:1px"></div>
<div class="a" style="left:337.0px;top:74.8px;width:4.0px;height:1.0px;background:#777"></div>
<div class="a" style="left:197.0px;top:82.5px;width:149.0px;height:9.3px;background:#f1f1f1;border:0.5px solid #e0e0e0"></div>
<div class="a" style="left:204.0px;top:86.6px;width:4.8px;height:1.6px;background:#aaa"></div>
<div class="a" style="left:261.0px;top:85.8px;width:2.6px;height:2.6px;background:#7a9cc8"></div>
<div class="a" style="left:265.0px;top:86.6px;width:10.2px;height:1.6px;background:#aab"></div>
<div class="a" style="left:281.0px;top:85.8px;width:2.4px;height:2.4px;border:0.5px solid #aaa;border-radius:50%"></div>
<div class="a" style="left:285.0px;top:86.6px;width:8.7px;height:1.6px;background:#bbb"></div>
<div class="a" style="left:301.0px;top:85.8px;width:2.4px;height:2.4px;border:0.5px solid #aaa;border-radius:50%"></div>
<div class="a" style="left:305.0px;top:86.6px;width:8.7px;height:1.6px;background:#bbb"></div>
<div class="a" style="left:318.0px;top:84.8px;width:4.0px;height:4.0px;background:#888"></div>
<div class="a" style="left:345.4px;top:45.4px;width:0.6px;height:90.1px;background:#e2e2e2"></div>
<div class="t" style="left:189.4px;top:140.6px;font-size:4.5px;color:#222;letter-spacing:0.12px"><span style="color:#3b78c0">Bild 8:</span> <b>In Thunderbird funktioniert derselbe Trick wie im Firefox</b></div>
<div class="a pl" style="left:25.0px;top:152.4px;width:97.5px;text-align-last:justify">gestattet anstatt in Browser eine andere</div>
<div class="a pl" style="left:25.0px;top:158.8px;width:97.5px;text-align-last:justify">andere bzw. höhere Skalierung geben, ist auch</div>
<div class="a pl" style="left:25.0px;top:165.3px;width:97.5px;text-align-last:left">das mehr oder weniger einfach zu haben.</div>
<div class="a pl" style="left:25.0px;top:171.8px;width:97.5px;text-align-last:justify">&nbsp;&nbsp;In Google Chrome ist es einfach: Öffnen Sie</div>
<div class="a pl" style="left:25.0px;top:178.2px;width:97.5px;text-align-last:justify">oben rechts übers <i>Drei-Punkte-Menü</i> die <i>Ein-</i></div>
<div class="a pl" style="left:25.0px;top:184.6px;width:97.5px;text-align-last:justify"><i>stellungen</i>. In der linken Spalte geht es (allen-</div>
<div class="a pl" style="left:25.0px;top:191.1px;width:97.5px;text-align-last:justify">falls via <i>Drei-Striche-Symbol</i>) zu <i>Darstellung</i>.</div>
<div class="a pl" style="left:25.0px;top:197.5px;width:97.5px;text-align-last:justify">Im rechten Teil finden Sie die <i>Schriftgrösse</i>, die</div>
<div class="a pl" style="left:25.0px;top:204.0px;width:97.5px;text-align-last:justify">Sie auf Wunsch von <i>Mittel</i> auf <i>Gross</i> oder <i>Sehr</i></div>
<div class="a pl" style="left:25.0px;top:210.4px;width:97.5px;text-align-last:left"><i>gross</i> umschalten, <span style='color:#3b78c0'>Bild 7</span>.</div>
<div class="a pl" style="left:25.0px;top:216.9px;width:97.5px;text-align-last:justify">&nbsp;&nbsp;Chrome ändert (intern) ausschliesslich die</div>
<div class="a pl" style="left:25.0px;top:223.3px;width:97.5px;text-align-last:justify">Bedienelemente, zum Beispiel Browsermenüs,</div>
<div class="a pl" style="left:25.0px;top:229.8px;width:97.5px;text-align-last:justify">und nicht die im Browser angezeigten Web-</div>
<div class="a pl" style="left:131.7px;top:152.4px;width:97.5px;text-align-last:justify">seiten. Für diese greifen Sie am einfachsten zu</div>
<div class="a pl" style="left:131.7px;top:158.8px;width:97.5px;text-align-last:left"><i>Ctrl+Mausrad</i>.</div>
<div class="a pl" style="left:131.7px;top:165.3px;width:97.5px;text-align-last:justify">&nbsp;&nbsp;Im Mozilla Firefox ist es einen Moment</div>
<div class="a pl" style="left:131.7px;top:171.8px;width:97.5px;text-align-last:justify">Öffnen Sie einen neuen Tab, tippen Sie die</div>
<div class="a pl" style="left:131.7px;top:178.2px;width:97.5px;text-align-last:justify">Adresse <i>about:config</i> ein und drücken Sie</div>
<div class="a pl" style="left:131.7px;top:184.6px;width:97.5px;text-align-last:justify"><i>Enter</i>. Klicken Sie auf <i>Risiko akzeptieren und</i></div>
<div class="a pl" style="left:131.7px;top:191.1px;width:97.5px;text-align-last:justify"><i>fortfahren</i>, anschliessend tippen Sie den Such-</div>
<div class="a pl" style="left:131.7px;top:197.5px;width:97.5px;text-align-last:justify">begriff <i>devp</i> ein. Der Eintrag <i>layout.css.dev</i></div>
<div class="a pl" style="left:131.7px;top:204.0px;width:97.5px;text-align-last:justify"><i>PixelsPerPx</i> ist normalerweise mit einem Wert</div>
<div class="a pl" style="left:131.7px;top:210.4px;width:97.5px;text-align-last:justify">von <i>-1.0</i> aktiv. Ändern Sie ihn nach einem</div>
<div class="a pl" style="left:131.7px;top:216.9px;width:97.5px;text-align-last:justify">Klick auf den <i>Bearbeiten</i>-Stift probeweise auf</div>
<div class="a pl" style="left:131.7px;top:223.3px;width:97.5px;text-align-last:justify"><i>1.5</i> führen das Mittel und klicken Sie danach</div>
<div class="a pl" style="left:131.7px;top:229.8px;width:97.5px;text-align-last:justify">aufs <i>Anwenden-Häkchen</i>. Die gesamte</div>
<div class="a pl" style="left:238.0px;top:152.4px;width:98px;text-align-last:justify">Firefox-Anzeige sollte sich nun vergrössern,</div>
<div class="a pl" style="left:238.0px;top:158.8px;width:98px;text-align-last:justify">inklusive Webseiteninhalt. War es zu viel, ver-</div>
<div class="a pl" style="left:238.0px;top:165.3px;width:98px;text-align-last:justify">ringern Sie den Wert wieder etwas, war es zu</div>
<div class="a pl" style="left:238.0px;top:171.8px;width:98px;text-align-last:justify">wenig, vergrössern Sie ihn. Soll der Eintrag</div>
<div class="a pl" style="left:238.0px;top:178.2px;width:98px;text-align-last:justify">wieder den Standardwert zurückerhalten, öffnen</div>
<div class="a pl" style="left:238.0px;top:184.6px;width:98px;text-align-last:justify">Sie ihn und wählen das <i>Zurücksetzen-Pfeil</i>.</div>
<div class="a pl" style="left:238.0px;top:191.1px;width:98px;text-align-last:justify">&nbsp;&nbsp;<b style='font-family:Liberation Sans'>Geheimtipp:</b> Das funktioniert identisch</div>
<div class="a pl" style="left:238.0px;top:197.5px;width:98px;text-align-last:justify">auch im Mailprogramm Mozilla Thunderbird,</div>
<div class="a pl" style="left:238.0px;top:204.0px;width:98px;text-align-last:justify"><span style='color:#3b78c0'>Bild 8</span>. Anstelle der <i>about:config</i>-Eingabe</div>
<div class="a pl" style="left:238.0px;top:210.4px;width:98px;text-align-last:justify">benutzen Sie in ihm oben rechts das <i>Drei-</i></div>
<div class="a pl" style="left:238.0px;top:216.9px;width:98px;text-align-last:justify"><i>Striche-Menü</i>. Öffnen die Einstellungen und</div>
<div class="a pl" style="left:238.0px;top:223.3px;width:98px;text-align-last:justify">klicken ganz unten auf <i>Konfiguration be-</i></div>
<div class="a pl" style="left:238.0px;top:229.8px;width:98px;text-align-last:justify"><i>arbeiten</i>. Das bringt Sie ins gleiche Fenster.</div>
<div class="a" style="left:331.0px;top:229.5px;width:3.5px;height:3.5px;background:#3b78c0;border-radius:50%"></div>
<div class="a" style="left:0.0px;top:246.3px;width:360.0px;height:0.6px;background:#aaa"></div>
<div class="a" style="left:25.0px;top:248.5px;width:10.5px;height:1.4px;background:#aaa"></div>
</div>

<!-- scrollbars -->
<div class="a" style="left:639px;top:112px;width:13px;height:494px;background:#2e2e2e"></div>
<div class="a" style="left:640px;top:112px;width:11px;height:493px;background:#5c5c5c;border-radius:2px"></div>
<div class="a" style="left:260px;top:607px;width:381px;height:12px;background:#3b3b3b"></div>
<div class="a" style="left:261px;top:607px;width:380px;height:11px;background:#5a5a5a;border-radius:2px"></div>
<div class="a" style="left:248px;top:607px;width:10px;height:10px;background:#5e5e5e"></div>
<svg style="left:642px;top:607px" width="12" height="12"><path d="M6 1l5 10-5-3-5 3z" fill="#c6c6c6"/></svg>

<!-- status bar -->
<div class="a" style="left:247px;top:619px;width:408px;height:23px;background:#454545"></div>
<div class="t" style="left:261px;top:628px;font-size:9.6px;color:#d6d6d6;letter-spacing:-0.05px">813, 1107</div>
<div class="a" style="left:317px;top:621px;width:38.5px;height:21px;background:#2b2b2b;border-radius:3px 3px 0 0;border:1px solid #262626;border-bottom:none"></div>
<div class="t" style="left:322.3px;top:629px;font-size:9.6px;color:#cfcfcf">px</div>
<svg style="left:339.5px;top:629.5px" width="11" height="7"><path d="M1 1l4.5 4.5 4.5-4.5" fill="none" stroke="#e0e0e0" stroke-width="1.6"/></svg>
<div class="a" style="left:356px;top:623px;width:25px;height:19px;background:#333;border:1px solid #2a2a2a"></div>
<div class="t" style="left:357.8px;top:629.6px;font-size:8.6px;color:#d0d0d0;letter-spacing:-0.35px">33.3 %</div>
<div class="a" style="left:381.5px;top:621px;width:14px;height:21px;background:#2b2b2b;border-radius:3px 3px 0 0"></div>
<svg style="left:383.5px;top:629.5px" width="11" height="7"><path d="M1 1l4.5 4.5 4.5-4.5" fill="none" stroke="#e0e0e0" stroke-width="1.6"/></svg>
<div class="t" style="left:397.6px;top:629px;font-size:9.62px;color:#dadada">pctipp_0323_14-17_Windows_Schrift-1.pdf (28.8 MB)</div>

<!-- right pane separator -->
<div class="a" style="left:652px;top:48px;width:6px;height:594px;background:#454545"></div>
<div class="a" style="left:657px;top:48px;width:1px;height:594px;background:#3d3d3d"></div>
<div class="a" style="left:655px;top:340px;width:2px;height:2.5px;background:#9a9a9a"></div>
<div class="a" style="left:655px;top:346px;width:2px;height:2.5px;background:#9a9a9a"></div>
<div class="a" style="left:655px;top:352px;width:2px;height:2.5px;background:#9a9a9a"></div>


<!-- RIGHT PANEL -->
<!-- dockable tabs -->
<div class="a" style="left:658px;top:50px;width:101px;height:17px;background:#2e2e2e"></div>
<div class="a" style="left:658px;top:50px;width:17px;height:17px;background:#454545"></div>
<div class="a" style="left:661px;top:53px;width:11px;height:12px;background:#fafafa;border:1px solid #222"></div>
<div class="a" style="left:666px;top:58px;width:2px;height:2px;background:#333"></div>
<div class="a" style="left:677px;top:53px;width:13px;height:13px;background:linear-gradient(135deg,#fff,#ccc);border:1px solid #1a1a1a"></div>
<div class="a" style="left:695px;top:53px;width:13px;height:13px;background:#fafafa;border:1px solid #1a1a1a"></div>
<div class="t" style="left:696.5px;top:55px;font-size:8px;font-weight:bold;color:#111;letter-spacing:-0.5px">Aa</div>
<div class="a" style="left:713px;top:53px;width:10px;height:13px;background:linear-gradient(90deg,#fff,#ddd);border-radius:0 3px 0 0"></div>
<svg style="left:727px;top:54px" width="13" height="12"><path d="M1 5h11v6H1z" fill="#ccc"/><path d="M2 5l2-3 2 3 2-3 2 3 2-3" fill="none" stroke="#ccc" stroke-width="1"/><path d="M2 7h9M2 9h9" stroke="#888" stroke-width="0.8"/></svg>
<div class="a" style="left:744px;top:53px;width:13px;height:13px;background:linear-gradient(90deg,#fff,#ccc);border:1px solid #1a1a1a"></div>
<svg style="left:900px;top:53px" width="12" height="12"><rect x="0.5" y="0.5" width="10" height="10" fill="none" stroke="#bbb"/><path d="M7 3l-3 2.5 3 2.5z" fill="#bbb"/></svg>

<!-- Basic. combo -->
<div class="a" style="left:660px;top:72px;width:252px;height:16px;background:#262626"></div>
<div class="t ui" style="left:662.8px;top:75px;letter-spacing:0.2px">Basic.</div>
<svg style="left:898px;top:77px" width="11" height="7"><path d="M1 1l4.5 4.5 4.5-4.5" fill="none" stroke="#e0e0e0" stroke-width="1.6"/></svg>
<div class="t" style="left:660px;top:89px;font-size:10.5px;font-style:italic;color:#cfcfcf">(Keine)</div>

<!-- brushes grid -->
<div class="a" style="left:660px;top:100px;width:240px;height:145px;background:#484848"></div>
<div class="a" style="left:660px;top:101px;width:228px;height:28px;background:#fff"></div>
<div class="a" style="left:660px;top:129px;width:57px;height:29px;background:#fff"></div>
<div class="a" style="left:900px;top:100px;width:12px;height:145px;background:#3a3a3a"></div>
<div class="a" style="left:901px;top:101px;width:10px;height:143px;background:#606060;border-radius:2px"></div>
<svg style="left:660px;top:101px" width="240" height="58">
  <defs>
   <radialGradient id="g1"><stop offset="0" stop-color="#000"/><stop offset="0.2" stop-color="#000" stop-opacity="0.85"/><stop offset="0.5" stop-color="#000" stop-opacity="0.3"/><stop offset="1" stop-color="#000" stop-opacity="0"/></radialGradient>
   <radialGradient id="g2"><stop offset="0" stop-color="#000"/><stop offset="0.3" stop-color="#000" stop-opacity="0.9"/><stop offset="0.65" stop-color="#000" stop-opacity="0.35"/><stop offset="1" stop-color="#000" stop-opacity="0"/></radialGradient>
   <radialGradient id="g3"><stop offset="0" stop-color="#000"/><stop offset="0.45" stop-color="#000" stop-opacity="0.9"/><stop offset="0.75" stop-color="#000" stop-opacity="0.4"/><stop offset="1" stop-color="#000" stop-opacity="0"/></radialGradient>
  </defs>
  <circle cx="14" cy="14" r="1.4" fill="#222"/>
  <rect x="31" y="11" width="24" height="5" fill="#000"/>
  <ellipse cx="71" cy="14.5" rx="11" ry="4" fill="url(#g2)"/>
  <rect x="88" y="13.5" width="24" height="1.3" fill="#000"/>
  <circle cx="127.5" cy="14.5" r="9" fill="url(#g1)"/>
  <circle cx="156" cy="14.5" r="10.5" fill="url(#g2)"/>
  <circle cx="184.5" cy="14.5" r="12.5" fill="url(#g3)"/>
  <circle cx="213" cy="14.5" r="12.7" fill="#000"/>
  <g stroke="#223" stroke-width="1.3">
   <path d="M53 25h4M55 23v4M82 25h4M84 23v4M110 25h4M112 23v4M139 25h4M141 23v4M167 25h4M169 23v4M196 25h4M198 23v4M222 25h4M224 23v4"/>
   <path d="M25 54h4M27 52v4"/>
  </g>
  <path d="M25 27l3-3v3z" fill="#8a9ae0"/>
  <path d="M14 30l3.2 7.5 8 .6-6.1 5.2 1.9 7.8-7-4.3-7 4.3 1.9-7.8-6.1-5.2 8-.6z" fill="#000"/>
  <circle cx="43" cy="44" r="0.8" fill="#aaa"/>
</svg>

<!-- second Basic combo -->
<div class="a" style="left:660px;top:247px;width:252px;height:15px;background:#262626"></div>
<div class="t ui" style="left:662.8px;top:250px;letter-spacing:0.2px">Basic.</div>
<svg style="left:898px;top:251px" width="11" height="7"><path d="M1 1l4.5 4.5 4.5-4.5" fill="none" stroke="#e0e0e0" stroke-width="1.6"/></svg>
<div class="a" style="left:660px;top:264px;width:252px;height:12px;background:#3d3d3d"></div>
<div class="a" style="left:660px;top:264px;width:22px;height:12px;background:#5c5c5c"></div>
<div class="t ui" style="left:661px;top:266px;color:#d6d6d6">Abst</div>
<svg style="left:900px;top:264px" width="10" height="12"><path d="M2 4l3-2.5 3 2.5M2 8l3 2.5 3-2.5" fill="none" stroke="#666" stroke-width="1"/></svg>

<!-- brush buttons -->
<svg style="left:660px;top:278px" width="252" height="18">
 <g fill="none" stroke="#c8c8c8" stroke-width="1.3">
  <path d="M14 4h6M14 8h5M14 12h4M14 15h9"/><path d="M17 13l7-8" stroke-width="1.8"/>
  <rect x="56" y="5" width="9" height="10"/><path d="M56 3v4M54 5h4" />
  <rect x="97.5" y="5.5" width="6" height="5"/><rect x="100.5" y="8.5" width="6" height="5"/>
  <rect x="138" y="3" width="11" height="11" fill="#c8c8c8" stroke="none"/><path d="M140.3 5.3l6.4 6.4M146.7 5.3l-6.4 6.4" stroke="#3a3a3a" stroke-width="1.6"/>
  <path d="M191 5a4.5 4.5 0 1 0 2 3"/>
  <path d="M224 11v-7h5l3 3v4" /><rect x="223" y="11" width="10" height="4" fill="#c8c8c8"/>
 </g>
 <path d="M189 3h5v5z" fill="#c8c8c8"/>
</svg>

<!-- separator -->
<div class="a" style="left:658px;top:297px;width:255px;height:1px;background:#3a3a3a"></div>
<div class="a" style="left:778px;top:299px;width:2px;height:2px;background:#aaa"></div>
<div class="a" style="left:784px;top:299px;width:2px;height:2px;background:#aaa"></div>
<div class="a" style="left:790px;top:299px;width:2px;height:2px;background:#aaa"></div>

<!-- layer tabs -->
<div class="a" style="left:710px;top:304px;width:93px;height:16px;background:#2e2e2e"></div>
<svg style="left:660px;top:304px" width="150" height="16">
  <g fill="#c8c8c8"><rect x="1" y="3" width="10" height="2.5" rx="1"/><rect x="1" y="7" width="10" height="2.5" rx="1"/><rect x="1" y="11" width="10" height="2.5" rx="1"/></g>
  <g fill="none" stroke="#c8c8c8" stroke-width="1"><rect x="52.5" y="2.5" width="10" height="11"/><path d="M56 3v10M59 3v10"/></g>
  <path d="M100 4.5c3 0 4 3 5 3.5s2-3.5 5-3.5M100 12c2-3 3-4 5-4.5 2 .5 3 1.5 5 4.5" fill="none" stroke="#c8c8c8" stroke-width="1.5"/><rect x="99" y="3.5" width="2.5" height="2.5" fill="#c8c8c8"/><rect x="108.5" y="3.5" width="2.5" height="2.5" fill="#c8c8c8"/>
</svg>
<div class="t ui" style="left:671.6px;top:307.5px">Ebenen</div>
<div class="t ui" style="left:724px;top:307.5px">Kanäle</div>
<div class="t ui" style="left:773px;top:307.5px">Pfade</div>
<svg style="left:900px;top:306px" width="12" height="12"><rect x="0.5" y="0.5" width="10" height="10" fill="none" stroke="#bbb"/><path d="M7 3l-3 2.5 3 2.5z" fill="#bbb"/></svg>

<!-- layers mode -->
<div class="a" style="left:660px;top:324px;width:214px;height:23px;background:#2c2c2c;border-radius:3px"></div>
<div class="t ui" style="left:665.5px;top:329.8px">Modus</div>
<div class="t ui" style="left:820.3px;top:329.6px">Normal</div>
<svg style="left:859px;top:331px" width="12" height="8"><path d="M1 1l5 5 5-5" fill="none" stroke="#d8d8d8" stroke-width="1.5"/></svg>
<div class="a" style="left:876px;top:324px;width:36px;height:23px;background:#2c2c2c;border-radius:3px"></div>
<svg style="left:879px;top:329px" width="32" height="14">
  <path d="M5 3a4 4 0 1 1-1 7" fill="none" stroke="#d0d0d0" stroke-width="1.4"/><path d="M2 3h5l-2 3z" fill="#d0d0d0"/><circle cx="4" cy="11" r="1.5" fill="#d0d0d0"/>
  <path d="M18 4l5 5 5-5" fill="none" stroke="#d8d8d8" stroke-width="1.5"/>
</svg>
<div class="a" style="left:660px;top:348px;width:252px;height:14px;background:#5f5f5f;border:1px solid #777"></div>
<div class="a" style="left:901px;top:349px;width:10px;height:12px;background:#252525"></div>
<svg style="left:902px;top:349px" width="8" height="12"><path d="M2 4l2-2 2 2M2 8l2 2 2-2" fill="none" stroke="#ccc" stroke-width="1"/></svg>
<div class="t ui" style="left:661px;top:350px;color:#e6e6e6">Deckkraft</div>
<div class="t ui" style="left:873.5px;top:349.7px;color:#e6e6e6">100.0</div>

<div class="t ui" style="left:659.4px;top:366.9px">Sperre:</div>
<svg style="left:695px;top:364px" width="60" height="16">
  <path d="M13 3.5l-6.5 8" stroke="#c8c8c8" stroke-width="1.7"/><path d="M6.8 10.5c-1.5 .5-2 2-2.5 3 1.5 0 3-.5 3.5-1.5z" fill="#c8c8c8"/>
  <path d="M27.5 3.5v10M22.5 8.5h10" stroke="#c8c8c8" stroke-width="1.3"/>
  <g fill="#c8c8c8"><circle cx="27.5" cy="3.8" r="1.3"/><circle cx="27.5" cy="13.2" r="1.3"/><circle cx="22.6" cy="8.5" r="1.3"/><circle cx="32.4" cy="8.5" r="1.3"/><circle cx="27.5" cy="8.5" r="1.4"/></g>
  <g fill="#c8c8c8"><rect x="44.5" y="3" width="2.5" height="2.5"/><rect x="49.5" y="3" width="2.5" height="2.5"/><rect x="42" y="5.5" width="2.5" height="2.5"/><rect x="47" y="5.5" width="2.5" height="2.5"/><rect x="52" y="5.5" width="2.5" height="2.5"/><rect x="44.5" y="8" width="2.5" height="2.5"/><rect x="49.5" y="8" width="2.5" height="2.5"/><rect x="42" y="10.5" width="2.5" height="2.5"/><rect x="47" y="10.5" width="2.5" height="2.5"/><rect x="52" y="10.5" width="2.5" height="2.5"/><rect x="44.5" y="13" width="2.5" height="1.5"/><rect x="49.5" y="13" width="2.5" height="1.5"/></g>
</svg>

<!-- layer list -->
<div class="a" style="left:660px;top:383px;width:252px;height:18px;background:#464646"></div>
<div class="a" style="left:660px;top:383px;width:24px;height:18px;background:#4b4b4b;border-right:1px solid #3e3e3e"></div>
<div class="a" style="left:685px;top:383px;width:21px;height:18px;background:#4a4a4a"></div>
<svg style="left:660px;top:383px" width="50" height="18">
  <path d="M5.5 9c3.5-4.5 9.5-4.5 12.5 0-3 4.5-9 4.5-12.5 0z" fill="#b8b8b8"/><circle cx="11.8" cy="9" r="1.8" fill="#555"/>
  <rect x="32.8" y="4" width="4.6" height="5" rx="1" fill="none" stroke="#c0c0c0" stroke-width="1.3"/><path d="M32.2 14.5a3 2.6 0 0 1 5.8 0" fill="none" stroke="#c0c0c0" stroke-width="1.5"/>
</svg>
<div class="a" style="left:660px;top:401px;width:252px;height:212px;background:#303030"></div>
<div class="a" style="left:660px;top:402px;width:252px;height:32px;background:#1f1f1f"></div>
<svg style="left:662px;top:409px" width="20" height="16"><path d="M2 8c4-6 12-6 16 0-4 6-12 6-16 0z" fill="none" stroke="#e0e0e0" stroke-width="1.6"/><circle cx="10" cy="8" r="2.8" fill="#e0e0e0"/></svg>
<div class="a" style="left:722px;top:403px;width:24px;height:31px;background:#fbfbfb;border:1px solid #888"></div>
<div class="a" style="left:726px;top:408px;width:16px;height:3px;background:#ddd"></div>
<div class="a" style="left:748px;top:405px;width:164px;height:25px;overflow:hidden"><div class="t ui" style="left:0.8px;top:8.9px;color:#e0e0e0;letter-spacing:0.37px">pctipp_0323_14-17_Windows_Schrift-1</div></div>
<div class="a" style="left:912px;top:401px;width:1px;height:33px;background:#454545"></div>

<div class="a" style="left:660px;top:613px;width:252px;height:11px;background:#242424"></div>
<div class="a" style="left:661px;top:614px;width:216px;height:10px;background:#666;border-radius:2px"></div>

<!-- layer buttons -->
<svg style="left:660px;top:626.5px" width="252" height="17">
 <g fill="none" stroke="#c8c8c8" stroke-width="1.3">
  <rect x="11.5" y="5.5" width="8" height="9"/><path d="M11 3v4M9 5h4"/>
  <path d="M41.5 6.5h4l1 1.5h6v7h-11z"/><path d="M47 9v5M44.5 11.5h5"/>
  <path d="M71 11l5-5 5 5" stroke-width="1.6"/>
  <path d="M102 6l5 5 5-5" stroke-width="1.6"/>
  <rect x="132.5" y="5.5" width="6" height="5"/><rect x="135.5" y="8.5" width="6" height="5"/>
  <path d="M160 6h5M160 9h4M160 12h5M160 15h4M168 5v9M166 12l2 2.5 2-2.5"/>
  <rect x="193" y="5" width="8" height="6"/>
  <rect x="225" y="4" width="12" height="12" fill="#d0d0d0" stroke="none"/><path d="M227.5 6.5l7 7M234.5 6.5l-7 7" stroke="#333" stroke-width="1.8"/>
 </g>
 <path d="M190 12h12l-3 4h-9z" fill="#c8c8c8"/>
</svg>

</body></html>
